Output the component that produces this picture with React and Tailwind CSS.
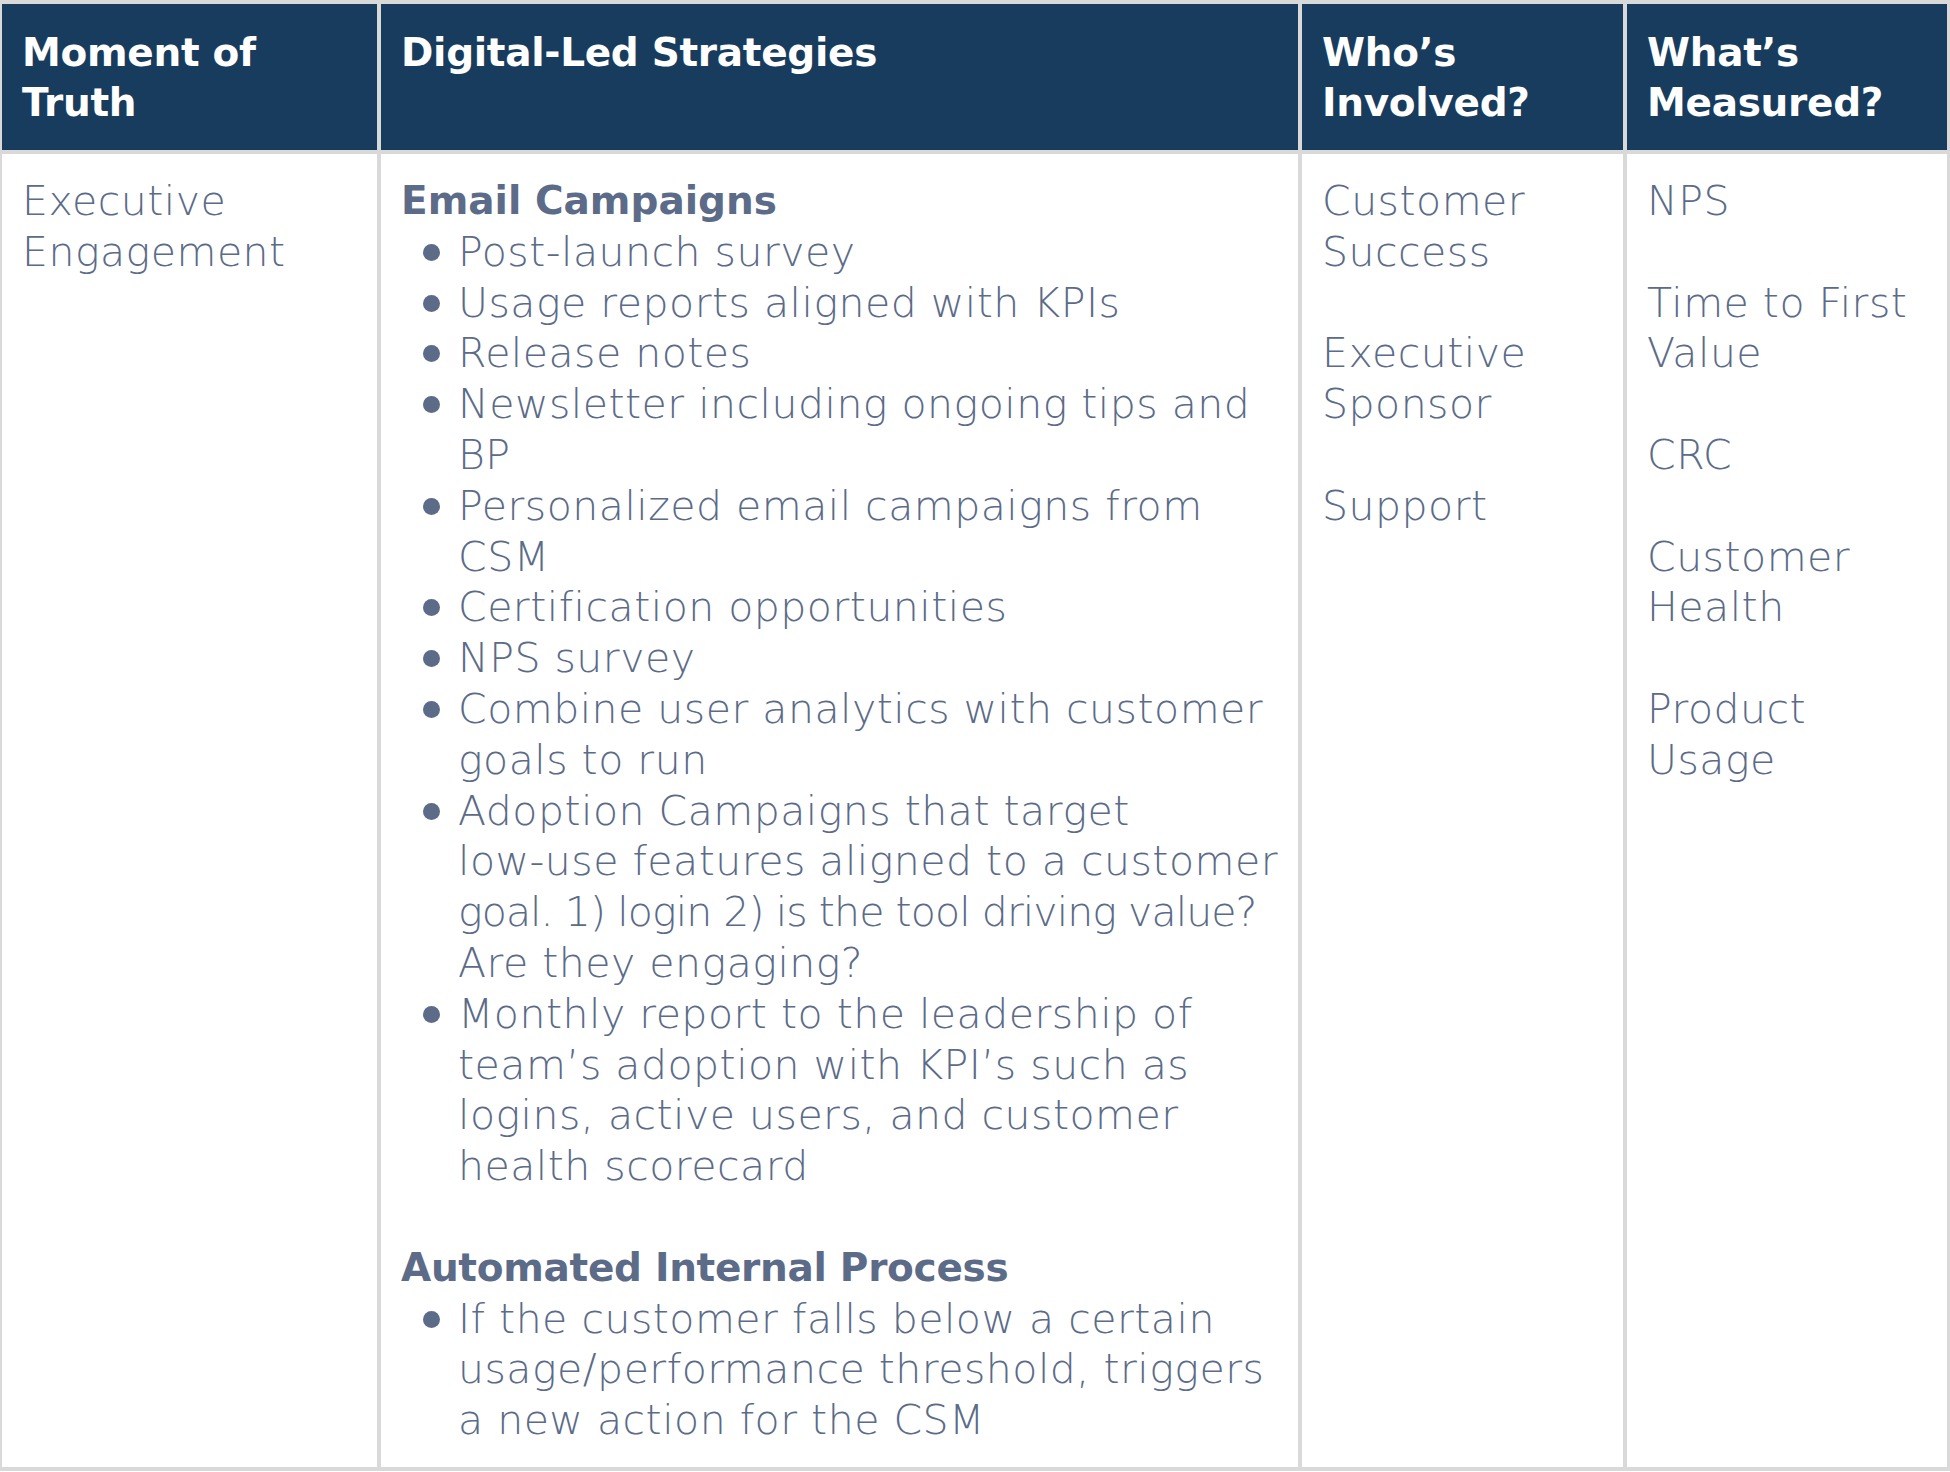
const font = { fontFamily: '"DejaVu Sans", "Noto Sans", sans-serif' };

const emailItems = [
  ['Post-launch survey'],
  ['Usage reports aligned with KPIs'],
  ['Release notes'],
  ['Newsletter including ongoing tips and', 'BP'],
  ['Personalized email campaigns from', 'CSM'],
  ['Certification opportunities'],
  ['NPS survey'],
  ['Combine user analytics with customer', 'goals to run'],
  [
    'Adoption Campaigns that target',
    'low-use features aligned to a customer',
    'goal. 1) login 2) is the tool driving value?',
    'Are they engaging?',
  ],
  [
    'Monthly report to the leadership of',
    'team’s adoption with KPI’s such as',
    'logins, active users, and customer',
    'health scorecard',
  ],
];

const automatedItems = [
  ['If the customer falls below a certain', 'usage/performance threshold, triggers', 'a new action for the CSM'],
];

function Bullets({ items }) {
  return (
    <ul className="pl-[22px]">
      {items.map((lines, i) => (
        <li key={i} className="flex items-start gap-[18px]">
          <span className="mt-[17px] w-[17px] h-[17px] shrink-0 rounded-full bg-[#5b6b88]" />
          <span className="whitespace-nowrap">
            {lines.map((l, j) => (
              <span key={j} className={l.startsWith('goal.') ? 'block tracking-[-0.9px]' : 'block'}>
                {l}
              </span>
            ))}
          </span>
        </li>
      ))}
    </ul>
  );
}

function Head({ children }) {
  return (
    <div className="bg-[#183c5e] text-white font-bold text-[39px] leading-[50px] tracking-[-0.3px] px-[20px] pt-[24px]">
      {children}
    </div>
  );
}

function Stack({ groups }) {
  return (
    <div className="flex flex-col gap-[50.8px]">
      {groups.map((g, i) => (
        <div key={i}>
          {g.map((l, j) => (
            <div key={j}>{l}</div>
          ))}
        </div>
      ))}
    </div>
  );
}

const cell = 'bg-white text-[#5b6b88] font-light text-[41px] leading-[50.8px] tracking-[0.5px] px-[20px] pt-[22px]';

export default function App() {
  return (
    <div className="w-[1950px] h-[1472px] bg-white" style={font}>
      <div className="grid grid-cols-[375px_917px_321px_320px] grid-rows-[146px_1313px] gap-[4px] bg-[#d9d9d9] pt-[4px] pl-[2px] pr-[3px] pb-[4px]">
        <Head>
          Moment of
          <br />
          Truth
        </Head>
        <Head>Digital-Led Strategies</Head>
        <Head>
          Who’s
          <br />
          Involved?
        </Head>
        <Head>
          What’s
          <br />
          Measured?
        </Head>

        <div className={cell}>
          <div>Executive</div>
          <div>Engagement</div>
        </div>

        <div className={cell}>
          <div className="font-bold text-[39px] tracking-normal">Email Campaigns</div>
          <Bullets items={emailItems} />
          <div className="font-bold text-[39px] tracking-[-0.3px] mt-[50.8px]">Automated Internal Process</div>
          <Bullets items={automatedItems} />
        </div>

        <div className={cell}>
          <Stack groups={[['Customer', 'Success'], ['Executive', 'Sponsor'], ['Support']]} />
        </div>

        <div className={cell}>
          <Stack
            groups={[
              ['NPS'],
              ['Time to First', 'Value'],
              ['CRC'],
              ['Customer', 'Health'],
              ['Product', 'Usage'],
            ]}
          />
        </div>
      </div>
    </div>
  );
}
